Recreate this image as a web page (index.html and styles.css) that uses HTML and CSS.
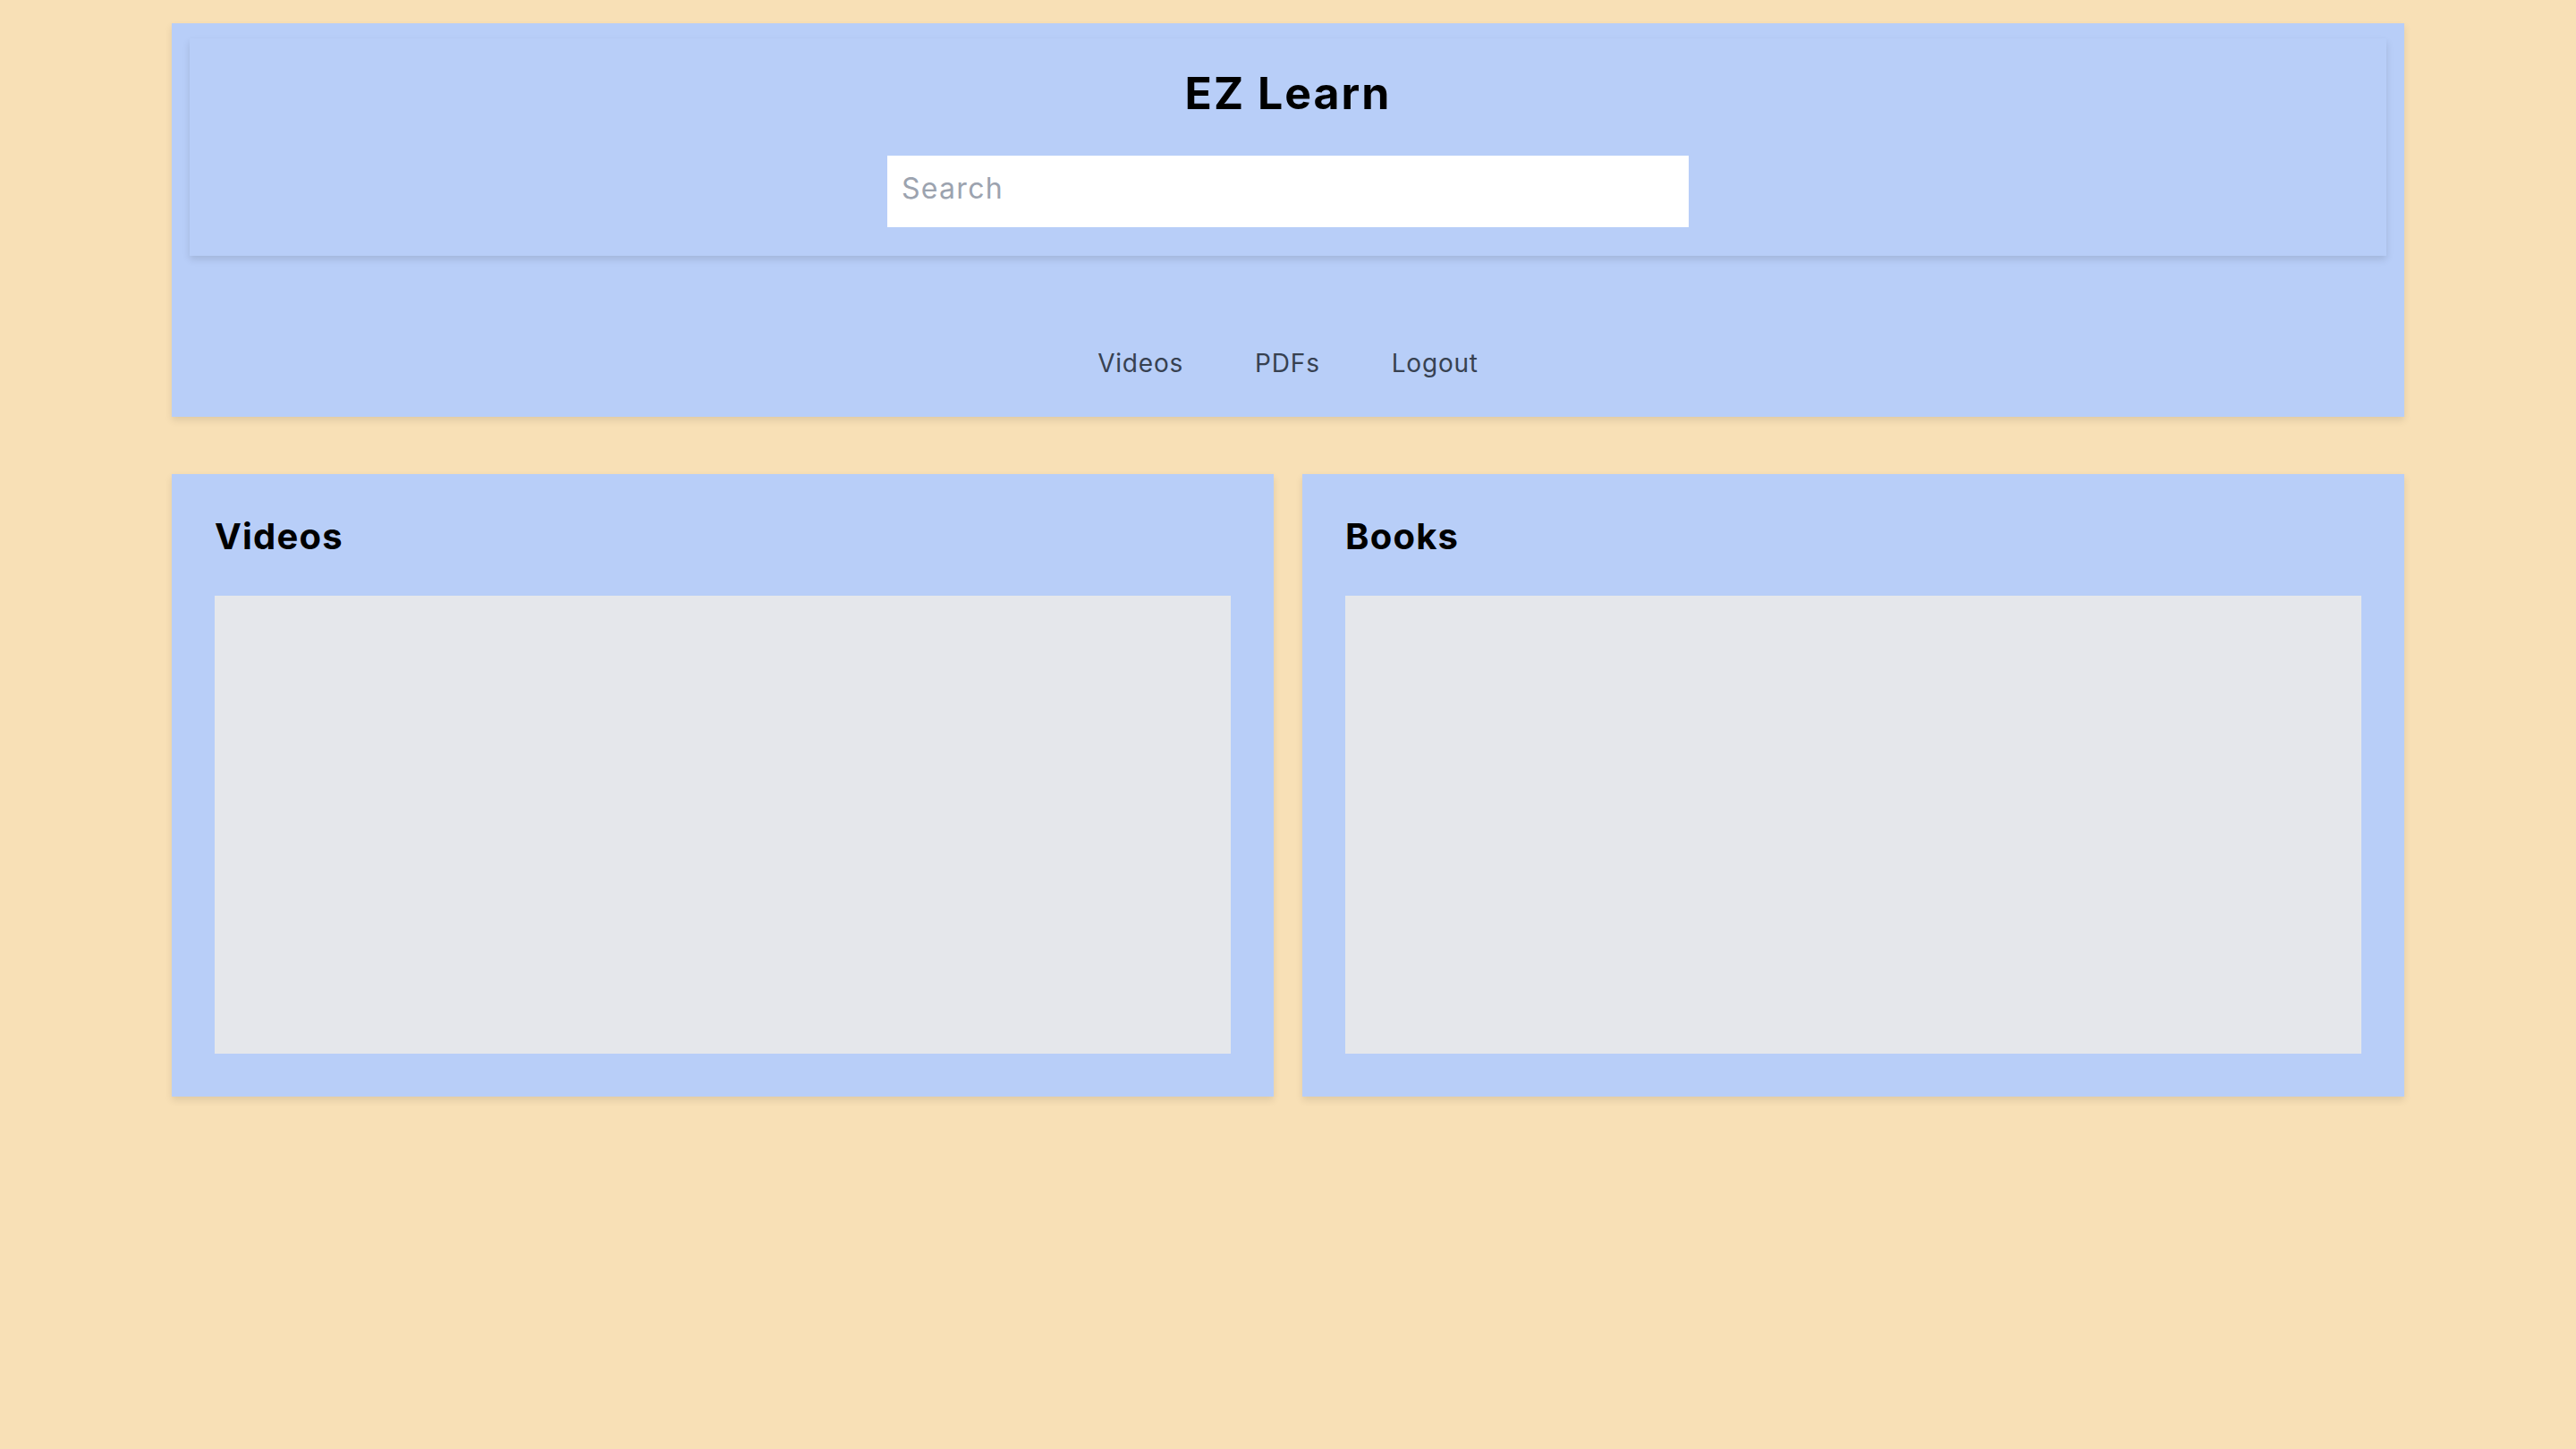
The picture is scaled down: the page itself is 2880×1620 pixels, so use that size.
FILE: index.html
```html
<!DOCTYPE html>
<html lang="en">
<head>
    <meta charset="UTF-8">
    <meta name="viewport" content="width=device-width, initial-scale=1.0">
    <title>EZ Learn</title>
    <link rel="stylesheet" href="styles.css">
</head>
<body>
    <div class="topbar">
        <header class="header">
            <h1 class="title">EZ Learn</h1>
            <input class="search" type="text" placeholder="Search">
        </header>
        <nav class="nav">
            <a href="#videos">Videos</a>
            <a href="#pdfs">PDFs</a>
            <a href="#logout">Logout</a>
        </nav>
    </div>
    <main class="cards">
        <section class="card" id="videos">
            <h2>Videos</h2>
            <div class="box"></div>
        </section>
        <section class="card" id="pdfs">
            <h2>Books</h2>
            <div class="box"></div>
        </section>
    </main>
</body>
</html>
```

FILE: styles.css
```css
body {
    margin: 0;
    padding: 26px 192px;
    background-color: #f8e0b6;
    font-family: Inter, Lato, sans-serif;
}
.topbar {
    background-color: #b8cef8;
    padding: 17px 20px 40px;
    box-shadow: 0 4px 8px rgba(0, 0, 0, 0.1);
}
.header {
    background-color: #b8cef8;
    padding: 29px 0 32px;
    text-align: center;
    box-shadow: 0 4px 8px rgba(0, 0, 0, 0.12);
}
.title {
    margin: 0 0 38px;
    font-size: 50px;
    line-height: 64px;
    font-weight: 700;
    letter-spacing: 2px;
    color: #000;
}
.search {
    display: block;
    box-sizing: border-box;
    width: 896px;
    height: 80px;
    margin: 0 auto;
    padding: 0 16px 8px;
    border: none;
    outline: none;
    background-color: #fff;
    font-family: inherit;
    font-size: 32px;
    letter-spacing: 1.3px;
}
.search::placeholder {
    color: #9ca3af;
}
.nav {
    display: flex;
    justify-content: center;
    gap: 80px;
    margin-top: 100px;
}
.nav a {
    font-size: 28px;
    line-height: 40px;
    letter-spacing: 0.8px;
    color: #374151;
    text-decoration: none;
}
.cards {
    display: grid;
    grid-template-columns: repeat(2, 1fr);
    gap: 32px;
    margin-top: 64px;
}
.card {
    background-color: #b8cef8;
    padding: 48px;
    box-shadow: 0 4px 8px rgba(0, 0, 0, 0.1);
}
.card h2 {
    margin: 0 0 44px;
    font-size: 40px;
    line-height: 44px;
    font-weight: 700;
    letter-spacing: 1.2px;
    color: #000;
}
.box {
    height: 512px;
    background-color: #e5e7eb;
}
```
